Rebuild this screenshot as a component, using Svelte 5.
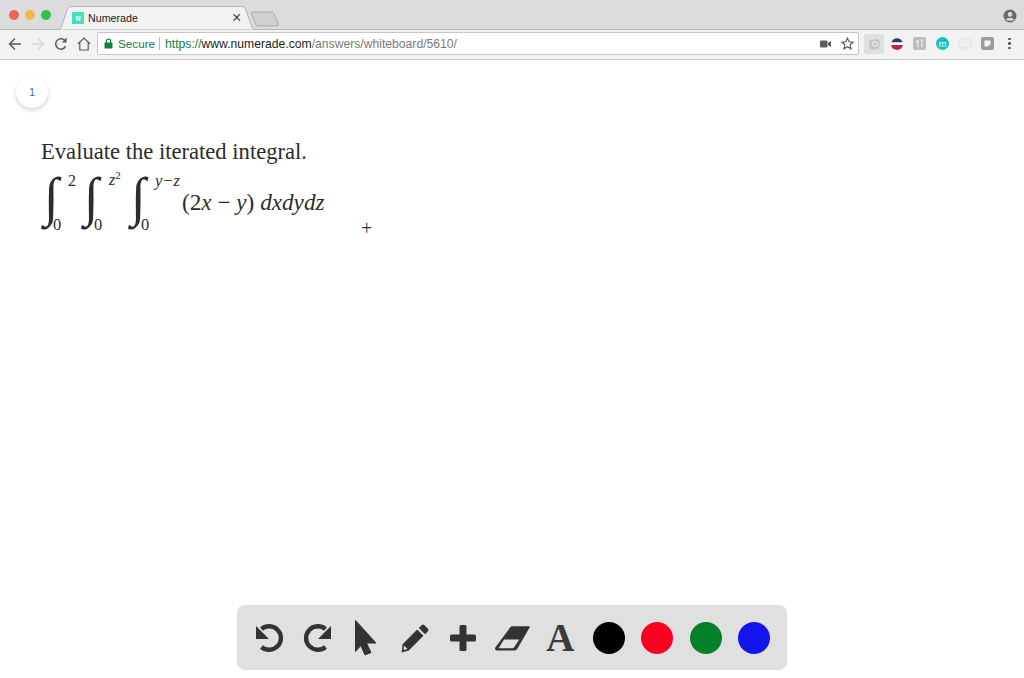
<script>
  const tools = ['undo', 'redo', 'pointer', 'pencil', 'plus', 'eraser'];
  const colors = ['black', '#fb0020', '#047f2a', '#1414ee'];
  const integrals = [
    { upper: '2', sup: '', gap: 'g1' },
    { upper: 'z', sup: '2', gap: 'g2' },
    { upper: 'y−z', sup: '', gap: 'g3' }
  ];
</script>

<div class="window">
  <header class="tabstrip">
    <div class="lights">
      <span class="light red"></span>
      <span class="light yellow"></span>
      <span class="light green"></span>
    </div>
    <div class="tab">
      <svg class="tabshape" width="197" height="24" viewBox="0 0 197 24">
        <path d="M0 23.5 C2 23.5 3 22 3.5 20.5 L9 4 C10 1.5 11 .5 14 .5 H183 C186 .5 187 1.5 188 4 L193.5 20.5 C194 22 195 23.5 197 23.5" fill="#f2f2f2" stroke="#b4b4b4"/>
      </svg>
      <span class="favicon">N</span>
      <span class="tabtitle">Numerade</span>
      <span class="tabclose">×</span>
    </div>
    <svg class="newtab" width="30" height="16" viewBox="0 0 30 16">
      <path d="M1.5 2.5 Q1 1 3 1 H21 Q23 1 23.5 2.5 L28.5 13 Q29 15 27 15 H8 Q6 15 5.5 13 Z" fill="#d0d0d0" stroke="#a8a8a8"/>
    </svg>
    <svg class="profile" width="14" height="14" viewBox="0 0 14 14">
      <circle cx="7" cy="7" r="6.5" fill="#6a6a6a"/>
      <circle cx="7" cy="5.4" r="2.3" fill="#dcdcdc"/>
      <path d="M2.8 10.6 C4 8.4 10 8.4 11.2 10.6 C10 12.2 4 12.2 2.8 10.6Z" fill="#dcdcdc"/>
    </svg>
  </header>

  <nav class="toolbar">
    <svg class="nav" width="14" height="14" viewBox="0 0 14 14" fill="none" stroke="#5a5a5a" stroke-width="1.5"><path d="M13 7H2M7 1.5 1.6 7 7 12.5"/></svg>
    <svg class="nav" width="14" height="14" viewBox="0 0 14 14" fill="none" stroke="#d8d8d8" stroke-width="1.5"><path d="M1 7H12M7 1.5 12.4 7 7 12.5"/></svg>
    <svg class="nav" width="14" height="14" viewBox="0 0 14 14" fill="none" stroke="#5a5a5a" stroke-width="1.5"><path d="M11.6 9.2A5.2 5.2 0 1 1 11.2 4"/><path d="M12.6 .6V5.4H7.8" fill="#5a5a5a" stroke="none"/></svg>
    <svg class="nav" width="14" height="14" viewBox="0 0 14 14" fill="none" stroke="#5a5a5a" stroke-width="1.2"><path d="M.8 7 7 1l6.2 6M2.8 5.6V13H11.2V5.6"/></svg>

    <div class="omnibox">
      <svg class="lock" width="9" height="11" viewBox="0 0 9 11"><rect x=".5" y="4.5" width="8" height="6" rx=".8" fill="#0f7d45"/><path d="M2.3 5V3.2a2.2 2.2 0 0 1 4.4 0V5" fill="none" stroke="#0f7d45" stroke-width="1.2"/></svg>
      <span class="secure">Secure</span>
      <span class="sep"></span>
      <span class="url"><span class="https">https://</span><span class="host">www.numerade.com</span><span class="path">/answers/whiteboard/5610/</span></span>
      <svg class="cam" width="11" height="8" viewBox="0 0 11 8"><rect y=".5" width="7.5" height="7" rx="1" fill="#5c5c5c"/><path d="M8 3 11 1V7L8 5Z" fill="#5c5c5c"/></svg>
      <svg class="star" width="13" height="13" viewBox="0 0 14 14"><path d="M7 1.2 8.7 5.2 13 5.6 9.8 8.4 10.8 12.7 7 10.4 3.2 12.7 4.2 8.4 1 5.6 5.3 5.2Z" fill="none" stroke="#555" stroke-width="1.2"/></svg>
    </div>

    <div class="extensions">
      <span class="ext ext1"><svg width="16" height="16" viewBox="0 0 16 16"><path d="M3 5 9 3l5 1-1 9-6 1-4-2Z" fill="#c6c6c6"/><circle cx="9" cy="8" r="2.4" fill="none" stroke="#f0f0f0"/></svg></span>
      <span class="ext ext2"><svg width="12" height="12" viewBox="0 0 12 12"><circle cx="6" cy="6" r="6" fill="#fff"/><path d="M.4 4.2A6 6 0 0 1 11.6 4.2Z" fill="#2a3c78"/><path d="M.1 7H11.9A6 6 0 0 1 .1 7Z" fill="#c2263a"/></svg></span>
      <span class="ext ext3"><svg width="13" height="13" viewBox="0 0 13 13"><rect width="13" height="13" rx="2" fill="#bdbdbd"/><path d="M5 3V10M7.5 3H9V10M3.5 5 5 3.4" fill="none" stroke="#eee" stroke-width="1.2"/></svg></span>
      <span class="ext ext4">m</span>
      <span class="ext ext5"><svg width="14" height="14" viewBox="0 0 14 14"><rect x="1" y="2" width="12" height="9" rx="1" fill="#f0f0f0" stroke="#e2e2e2"/><rect x="4" y="11" width="6" height="2" fill="#eaeaea"/></svg></span>
      <span class="ext ext6"><svg width="13" height="13" viewBox="0 0 13 13"><rect width="13" height="13" rx="2" fill="#9c9c9c"/><path d="M3.5 3.5H9.5V7L7 9.5H3.5Z" fill="#f4f4f4"/></svg></span>
      <span class="menu"><i></i><i></i><i></i></span>
    </div>
  </nav>

  <main class="page">
    <div class="badge">1</div>
    <section class="question">
      <p class="prompt">Evaluate the iterated integral.</p>
      <div class="formula">
        {#each integrals as item}
          <span class="integral {item.gap}">
            <span class="sign">∫</span>
            <span class="upper">{item.upper}{#if item.sup}<sup>{item.sup}</sup>{/if}</span>
            <span class="lower">0</span>
          </span>
        {/each}
        <span class="body">(2<em>x</em> − <em>y</em>) <em>dxdydz</em></span>
      </div>
    </section>
    <span class="cursor">+</span>

    <div class="palette">
      {#each tools as tool}
        <span class="tool">
          {#if tool === 'undo'}
            <svg width="32" height="32" viewBox="0 0 32 32"><path d="M8.5 7A11.8 11.8 0 1 1 8.5 25" fill="none" stroke="#333" stroke-width="4.4"/><path d="M3 4 16 17H3Z" fill="#333"/></svg>
          {:else if tool === 'redo'}
            <svg width="32" height="32" viewBox="0 0 32 32"><path d="M23.5 7A11.8 11.8 0 1 0 23.5 25" fill="none" stroke="#333" stroke-width="4.4"/><path d="M29 4 16 17H29Z" fill="#333"/></svg>
          {:else if tool === 'pointer'}
            <svg width="32" height="38" viewBox="0 0 32 38"><path d="M5.5 1.5 26 24H16.5L21 33.5 15 36 10.8 26.5 5.5 32.5Z" fill="#333" stroke="#333" stroke-linejoin="round"/></svg>
          {:else if tool === 'pencil'}
            <svg width="32" height="32" viewBox="0 0 32 32"><path d="M22.6 3.2a2 2 0 0 1 2.8 0l3.4 3.4a2 2 0 0 1 0 2.8L26 12.2 19.8 6ZM18.2 7.6 24.4 13.8 9.8 28.4 2.6 30.4 3.6 22.2Z" fill="#333"/><path d="M5 23.5 8.5 27 4.6 28Z" fill="#e0e0e0"/></svg>
          {:else if tool === 'plus'}
            <svg width="32" height="32" viewBox="0 0 32 32" fill="#333"><rect x="12.5" y="3" width="7" height="26" rx="1.6"/><rect x="3" y="12.5" width="26" height="7" rx="1.6"/></svg>
          {:else}
            <svg width="40" height="32" viewBox="0 0 40 32"><path d="M18.5 5a2 2 0 0 1 1.5-.8H37a1 1 0 0 1 .6 1.4L25.5 26.5a4 4 0 0 1-3 2H5a2 2 0 0 1-1.7-3Z" fill="#333"/><path d="M6.6 26.2 12 17.4H27.2L22 25.4a2 2 0 0 1-1.6.8Z" fill="#e0e0e0"/></svg>
          {/if}
        </span>
      {/each}
      <span class="tool letter">A</span>
      {#each colors as c}
        <span class="tool"><span class="swatch" style="background:{c}"></span></span>
      {/each}
    </div>
  </main>
</div>

<style>
  :global(body) { margin: 0; background: #fff; }
  .window { width: 1024px; height: 678px; display: flex; flex-direction: column; overflow: hidden; font-family: "Liberation Sans", Arial, sans-serif; }

  .tabstrip { height: 30px; box-sizing: border-box; background: #dcdcdc; display: flex; align-items: flex-end; position: relative; border-bottom: 1px solid #b6b6b6; }
  .lights { display: flex; gap: 6px; padding-left: 9px; align-self: flex-start; margin-top: 10px; width: 49px; }
  .light { width: 10px; height: 10px; border-radius: 50%; }
  .red { background: #f0605c; }
  .yellow { background: #f7b84a; }
  .green { background: #2ec24e; }
  .tab { position: relative; width: 197px; height: 24px; margin-bottom: -1px; display: flex; align-items: center; padding-left: 14px; box-sizing: border-box; }
  .tabshape { position: absolute; left: 0; top: 0; }
  .favicon { position: relative; width: 12px; height: 12px; background: #3fe3bd; color: #fff; font-size: 7px; font-weight: 700; display: flex; align-items: center; justify-content: center; }
  .tabtitle { position: relative; margin-left: 4px; font-size: 10.7px; color: #222; }
  .tabclose { position: absolute; left: 174px; top: 2px; font-size: 16px; line-height: 20px; color: #444; }
  .newtab { margin-left: -5px; margin-bottom: 2px; }
  .profile { position: absolute; right: 7px; top: 9px; }

  .toolbar { height: 30px; box-sizing: border-box; background: #f2f2f2; border-bottom: 1px solid #cfcfcf; display: flex; align-items: center; padding: 0 0 2px 8px; }
  .nav { margin-right: 9px; flex: none; }
  .omnibox { width: 762px; height: 23px; margin-left: -3px; box-sizing: border-box; background: #fff; border: 1px solid #c6c6c6; border-radius: 2px; display: flex; align-items: center; padding-left: 6px; flex: none; }
  .lock { margin-right: 5px; }
  .secure { color: #0f7d45; font-size: 11.7px; }
  .sep { width: 1px; height: 13px; background: #bbb; margin: 0 5px 0 4px; }
  .url { font-size: 12.17px; }
  .https { color: #0f7d45; }
  .host { color: #1c1c1c; }
  .path { color: #7a7a7a; }
  .cam { margin-left: auto; }
  .star { margin: 0 4px 0 10px; }

  .extensions { display: flex; align-items: center; margin-left: 1px; }
  .ext { width: 23px; display: flex; justify-content: center; align-items: center; height: 18px; }
  .ext1 { background: #e0e0e0; width: 20px; height: 20px; border-radius: 2px; margin: 0 1px 0 4px; }
  .ext4 { background: #12c2c0; width: 13px; height: 13px; border-radius: 50%; color: #fff; font-size: 9px; margin: 0 4px 0 5px; }
  .menu { display: flex; flex-direction: column; gap: 2px; margin-left: 9px; }
  .menu i { width: 2.5px; height: 2.5px; border-radius: 50%; background: #555; }

  .page { position: relative; height: 618px; box-sizing: border-box; padding: 16px 0 8px 16px; display: flex; flex-direction: column; background: #fff; }
  .badge { width: 32px; height: 32px; border-radius: 50%; background: #fff; box-shadow: 0 2px 4px rgba(0, 0, 0, .18); color: #4a68b8; font-size: 11px; display: flex; align-items: center; justify-content: center; }
  .question { margin: 32px 0 0 25px; color: #2c2c2c; font-family: "Liberation Serif", serif; }
  .prompt { margin: 0; font-size: 22.6px; line-height: 24px; }
  .formula { display: flex; align-items: flex-start; margin-top: 9px; height: 62px; position: relative; }
  .integral { position: relative; display: block; width: 40px; height: 62px; flex: none; }
  .g2 { width: 47px; }
  .g3 { width: 54px; }
  .sign { position: absolute; left: 3px; top: -11px; font-size: 54px; line-height: 70px; letter-spacing: -7px; }
  .upper { position: absolute; left: 27px; top: -1px; font-size: 16px; font-style: italic; line-height: 18px; white-space: nowrap; }
  .g1 .upper { left: 27px; font-style: normal; }
  .g2 .upper { left: 28px; top: -2px; }
  .g2 .upper sup { font-size: 11px; }
  .g3 .upper { left: 27px; font-size: 16.5px; }
  .upper sup { font-size: 10px; font-style: normal; line-height: 0; }
  .lower { position: absolute; left: 12px; top: 43px; font-size: 16.5px; line-height: 18px; }
  .g2 .lower, .g3 .lower { left: 13px; }
  .body { font-size: 23.2px; line-height: 26px; margin-top: 16px; white-space: nowrap; }
  .cursor { position: absolute; left: 361px; top: 158px; font-family: "Liberation Serif", serif; font-size: 20px; line-height: 20px; color: #333; }

  .palette { margin-top: auto; margin-left: 221px; width: 550px; height: 65px; box-sizing: border-box; border-radius: 8px; background: #e0e0e0; padding-left: 8px; display: flex; align-items: center; flex: none; }
  .tool { width: 48.5px; flex: none; display: flex; justify-content: center; align-items: center; }
  .letter { font-family: "Liberation Serif", serif; font-weight: 700; font-size: 39px; line-height: 40px; color: #3a3a3a; }
  .swatch { width: 32px; height: 32px; border-radius: 50%; display: block; }
</style>
